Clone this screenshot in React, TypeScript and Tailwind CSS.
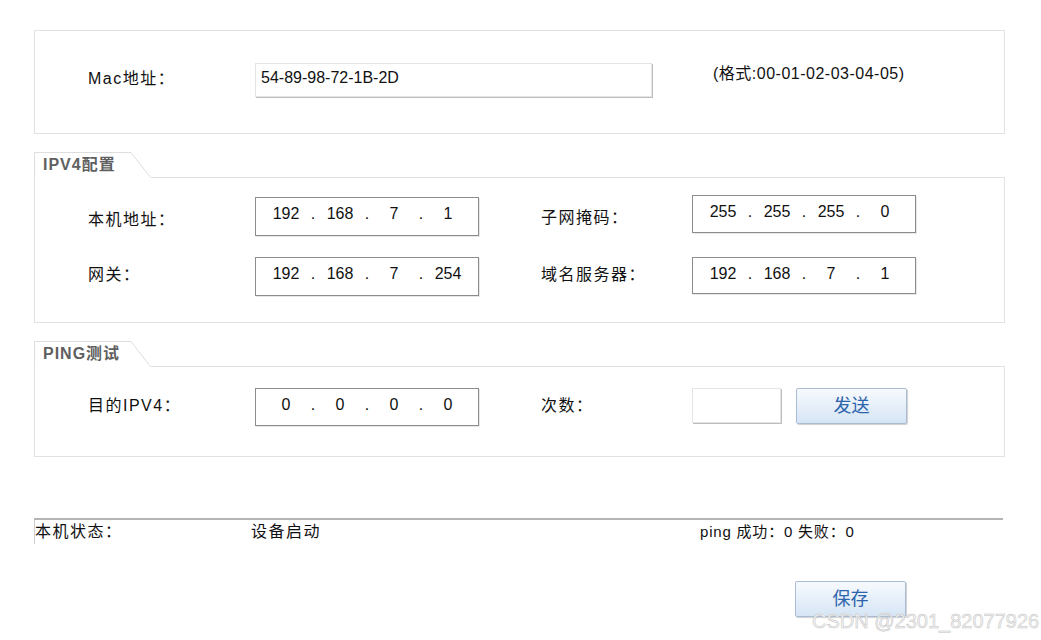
import React from 'react';

const IpBox = ({ parts, h = 'h-[39px]' }: { parts: string[]; h?: string }) => (
  <div className={`w-[224px] ${h} border border-[#8c8c8c] shadow-[1px_1px_0_#e8e8e8] bg-white flex items-start pt-[4px] pl-[12px] text-[16px]`}>
    {parts.map((p, i) => (
      <React.Fragment key={i}>
        <span className="w-[36px] text-center">{p}</span>
        {i < parts.length - 1 && <span className="w-[18px] text-center">.</span>}
      </React.Fragment>
    ))}
  </div>
);

const Tab = ({ label }: { label: string }) => (
  <div className="relative z-10 -mb-px h-[26px] w-[120px]">
    <svg className="absolute inset-0" width="120" height="26" viewBox="0 0 120 26">
      <path d="M0 26 L0 0 L97 0 L116.5 25 L116.5 26 Z" fill="white" />
      <path d="M0.5 26 L0.5 0.5 L97 0.5 L116.5 25.5" fill="none" stroke="#dedede" strokeWidth="1" />
    </svg>
    <span className="relative block pl-[9px] pt-[4px] text-[16px] tracking-[1px] font-bold text-[#5f5f5f] leading-[18px]">
      {label}
    </span>
  </div>
);

const BlueButton = ({ label }: { label: string }) => (
  <button className="w-[111px] h-[36px] rounded-[2px] border border-[#a9bcd3] bg-gradient-to-b from-[#f7fafd] to-[#d6e5f5] text-[#2d64ac] text-[18px] shadow-[1px_1px_1px_#d0d0d0]">
    {label}
  </button>
);

export default function App() {
  return (
    <div className="w-[1041px] h-[640px] bg-white relative overflow-hidden text-[#111] font-['Liberation_Sans','Noto_Sans_CJK_SC',sans-serif]">
      <div className="pl-[34px] pt-[30px]">
        {/* MAC */}
        <div className="w-[971px] h-[104px] border border-[#e2e2e2] pl-[53px] pt-[32px]">
          <div className="flex items-start">
            <div className="w-[167px] pt-[4px] text-[16px] tracking-[1.5px]">Mac地址：</div>
            <div className="w-[397px] h-[34px] border border-[#e4e4e4] shadow-[1px_1px_0_#bdbdbd] pl-[5px] pt-[2px] text-[16px]">
              54-89-98-72-1B-2D
            </div>
            <div className="ml-[61px] -mt-[1px] text-[16px] tracking-[0.5px]">(格式:00-01-02-03-04-05)</div>
          </div>
        </div>

        {/* IPV4 */}
        <div className="mt-[18px]">
          <Tab label="IPV4配置" />
          <div className="w-[971px] h-[146px] border border-[#e2e2e2] pl-[53px] pt-[19px]">
            <div className="flex items-start h-[40px]">
              <div className="w-[167px] pt-[11px] text-[16px] tracking-[1.5px]">本机地址：</div>
              <IpBox parts={['192', '168', '7', '1']} />
              <div className="w-[62px]" />
              <div className="w-[151px] pt-[9px] text-[16px] tracking-[1.5px]">子网掩码：</div>
              <div className="-mt-[2px]">
                <IpBox parts={['255', '255', '255', '0']} h="h-[38px]" />
              </div>
            </div>
            <div className="flex items-start h-[40px] mt-[20px]">
              <div className="w-[167px] pt-[6px] text-[16px] tracking-[1.5px]">网关：</div>
              <IpBox parts={['192', '168', '7', '254']} />
              <div className="w-[62px]" />
              <div className="w-[151px] pt-[6px] text-[16px] tracking-[1.5px]">域名服务器：</div>
              <IpBox parts={['192', '168', '7', '1']} h="h-[37px]" />
            </div>
          </div>
        </div>

        {/* PING */}
        <div className="mt-[18px]">
          <Tab label="PING测试" />
          <div className="w-[971px] h-[91px] border border-[#e2e2e2] pl-[53px] pt-[21px]">
            <div className="flex items-start">
              <div className="w-[167px] pt-[6px] text-[16px] tracking-[1.5px]">目的IPV4：</div>
              <IpBox parts={['0', '0', '0', '0']} h="h-[38px]" />
              <div className="w-[62px]" />
              <div className="w-[151px] pt-[6px] text-[16px] tracking-[1.5px]">次数：</div>
              <div className="w-[89px] h-[35px] border border-[#e4e4e4] shadow-[1px_1px_0_#bdbdbd] bg-white" />
              <div className="ml-[15px]">
                <BlueButton label="发送" />
              </div>
            </div>
          </div>
        </div>

        {/* status */}
        <div className="mt-[61px] w-[969px] border-t-2 border-[#b4b4b4]">
          <div className="flex items-start text-[16px] tracking-[1.5px] border-l border-[#cfcfcf] h-[24px]">
            <div className="w-[216px]">本机状态：</div>
            <div className="w-[449px]">设备启动</div>
            <div className="text-[15px] tracking-[0.8px] pt-[1px]">ping 成功：0 失败：0</div>
          </div>
        </div>

        <div className="mt-[37px] ml-[761px]">
          <BlueButton label="保存" />
        </div>
      </div>

      <div className="absolute left-[812px] top-[609px] text-[20px] leading-[24px] text-[#f4f4f4] [-webkit-text-stroke:0.5px_#c2c2c2] font-['Liberation_Sans',sans-serif]">
        CSDN @2301_82077926
      </div>
    </div>
  );
}
